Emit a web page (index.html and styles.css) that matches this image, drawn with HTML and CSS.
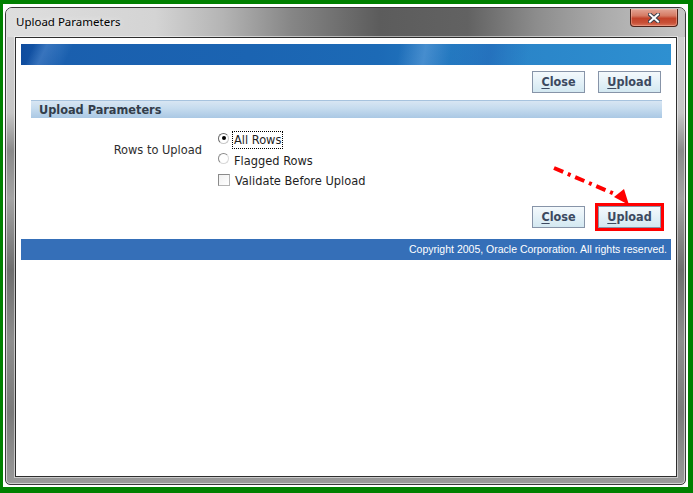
FILE: index.html
```html
<!DOCTYPE html>
<html>
<head>
<meta charset="utf-8">
<title>Upload Parameters</title>
<link rel="stylesheet" href="styles.css">
</head>
<body>
<div class="frame">
  <div class="titlebar">
    <span class="title">Upload Parameters</span>
    <div class="xbtn">
      <svg width="12" height="10" viewBox="0 0 12 10">
        <path d="M2 1.5 L10 8.5 M10 1.5 L2 8.5" stroke="#3a3f4a" stroke-width="4" stroke-linecap="square" fill="none"/>
        <path d="M2 1.5 L10 8.5 M10 1.5 L2 8.5" stroke="#ffffff" stroke-width="2" stroke-linecap="square" fill="none"/>
      </svg>
    </div>
  </div>
  <div class="client">
    <div class="banner"></div>
    <div class="page">
      <div class="btnrow">
        <button class="btn"><u>C</u>lose</button>
        <button class="btn"><u>U</u>pload</button>
      </div>
      <div class="header">Upload Parameters</div>
      <div class="form">
        <div class="label">Rows to Upload</div>
        <div class="options">
          <div class="opt"><span class="radio checked"></span><span class="focus">All Rows</span></div>
          <div class="opt"><span class="radio"></span><span class="text">Flagged Rows</span></div>
          <div class="opt"><span class="check"></span><span class="text">Validate Before Upload</span></div>
        </div>
      </div>
      <div class="btnrow bottom">
        <button class="btn"><u>C</u>lose</button>
        <button class="btn marked"><u>U</u>pload</button>
      </div>
    </div>
    <div class="footer">Copyright 2005, Oracle Corporation. All rights reserved.</div>
  </div>
</div>
<svg class="arrow" width="693" height="493" viewBox="0 0 693 493">
  <path d="M554 168 L617 195" stroke="#ff0000" stroke-width="4" stroke-dasharray="10 5 3 5" fill="none"/>
  <polygon points="614,197 624,189 629,205" fill="#ff0000"/>
</svg>
</body>
</html>
```

FILE: styles.css
```css
html, body {
  margin: 0;
}
body {
  width: 693px;
  height: 493px;
  box-sizing: border-box;
  border-style: solid;
  border-color: #008000;
  border-width: 4px 5px 6px 3px;
  padding: 3px 2px 2px 2px;
  background: #ffffff;
  position: relative;
  overflow: hidden;
  font-family: "DejaVu Sans", sans-serif;
}
.frame {
  box-sizing: border-box;
  width: 681px;
  height: 478px;
  border: 1px solid #3a3a3a;
  border-radius: 7px 7px 5px 5px;
  display: flex;
  flex-direction: column;
  background: linear-gradient(to bottom, #d4d4d4 0%, #c6c6c6 22%, #8a8a8a 30%, #a4a4a4 40%, #6e6e6e 55%, #8e8e8e 70%, #7a7a7a 85%, #9a9a9a 100%);
  box-shadow: inset 0 0 0 1px rgba(255,255,255,0.55);
}
.titlebar {
  height: 29px;
  display: flex;
  align-items: flex-start;
  border-radius: 6px 6px 0 0;
  background: linear-gradient(to right, #dedede 0%, #d4d4d4 22%, #b4b4b4 32%, #868686 42%, #5c5c5c 55%, #626262 68%, #8c8c8c 78%, #ababab 88%, #c6c6c6 100%);
}
.title {
  padding-left: 10px;
  line-height: 28px;
  font-family: "Noto Sans", sans-serif;
  font-size: 11.5px;
  color: #000000;
  text-shadow: 0 0 6px rgba(255,255,255,0.8);
}
.xbtn {
  margin-left: auto;
  margin-right: 7px;
  margin-top: 1px;
  box-sizing: border-box;
  width: 48px;
  height: 18px;
  border: 1px solid #4e2219;
  border-top: none;
  border-radius: 0 0 4px 4px;
  background: linear-gradient(to bottom, #e3a595 0%, #d57a63 40%, #c2432a 55%, #c85036 80%, #d9735a 100%);
  display: flex;
  align-items: center;
  justify-content: center;
  box-shadow: inset 0 0 0 1px rgba(255,200,180,0.4);
}
.client {
  flex: 1;
  margin: 0 8px 7px 9px;
  border: 1px solid #2e2e2e;
  background: #ffffff;
  box-shadow: 0 0 0 1px rgba(255,255,255,0.5);
  display: flex;
  flex-direction: column;
}
.banner {
  margin: 6px 5px 0 5px;
  height: 21px;
  background:
    linear-gradient(115deg, rgba(255,255,255,0) 0%, rgba(255,255,255,0) 2%, rgba(120,170,230,0.35) 4%, rgba(255,255,255,0) 8%),
    linear-gradient(100deg, rgba(255,255,255,0) 58%, rgba(140,190,240,0.35) 62%, rgba(255,255,255,0) 66%, rgba(30,80,170,0.3) 72%, rgba(255,255,255,0) 78%),
    linear-gradient(to right, #0f4c9e 0%, #1a5fae 6%, #1b64b2 35%, #1c6ab6 55%, #2a84c8 75%, #2e90d1 100%);
}
.page {
  padding: 0 14px 0 15px;
}
.btnrow {
  margin-top: 6px;
  margin-right: 1px;
  display: flex;
  justify-content: flex-end;
  gap: 13px;
}
.btn {
  box-sizing: border-box;
  height: 22px;
  padding: 0;
  margin: 0;
  border: 1px solid #8794a8;
  border-radius: 0;
  background: linear-gradient(to bottom, #f4f9fc 0%, #e6f2f8 45%, #d3e8f1 100%);
  font-family: "DejaVu Sans Condensed", "DejaVu Sans", sans-serif;
  font-stretch: condensed;
  font-weight: bold;
  font-size: 12.5px;
  color: #3c4960;
  line-height: 20px;
  width: 53px;
  text-align: center;
}
.btn + .btn {
  width: 63px;
}
.btn u {
  text-decoration-thickness: 1px;
  text-underline-offset: 2px;
}
.btn.marked {
  outline: 3px solid #ff0000;
  outline-offset: 0;
}
.header {
  margin-top: 7px;
  box-sizing: border-box;
  height: 18px;
  padding-left: 8px;
  border-top: 1px solid #a7c3de;
  background: linear-gradient(to bottom, #d8e6f3 0%, #c5dbee 45%, #aac8e4 100%);
  font-family: "DejaVu Sans Condensed", "DejaVu Sans", sans-serif;
  font-stretch: condensed;
  font-weight: bold;
  font-size: 12.6px;
  line-height: 17px;
  color: #333d4a;
}
.form {
  margin-top: 12px;
  display: grid;
  grid-template-columns: 171px 1fr;
  column-gap: 16px;
  font-family: "DejaVu Sans Condensed", "DejaVu Sans", sans-serif;
  font-stretch: condensed;
  font-size: 12.7px;
}
.label {
  padding-top: 10px;
  line-height: 20px;
  text-align: right;
  color: #2e2e2e;
}
.options {
  display: flex;
  flex-direction: column;
}
.opt {
  height: 20px;
  display: flex;
  align-items: center;
  gap: 5px;
  color: #1e1e1e;
}
.radio {
  box-sizing: border-box;
  width: 11px;
  height: 11px;
  margin-top: -4px;
  border-radius: 50%;
  border: 1px solid;
  border-color: #8a8a8a #d8d8d8 #d8d8d8 #8a8a8a;
  background: #ffffff;
  position: relative;
}
.radio.checked {
  border-color: #6a6a6a #c8c8c8 #c8c8c8 #6a6a6a;
}
.radio.checked::after {
  content: "";
  position: absolute;
  left: 2.5px;
  top: 2.5px;
  width: 4px;
  height: 4px;
  border-radius: 50%;
  background: #000000;
}
.check {
  box-sizing: border-box;
  width: 12px;
  height: 12px;
  border: 1px solid;
  border-color: #8a8a8a #b4b4b4 #b4b4b4 #8a8a8a;
  background: linear-gradient(135deg, #f0f0f0, #ffffff);
}
.focus {
  outline: 1px dotted #000000;
  outline-offset: 1px;
  line-height: 14px;
}
.bottom {
  margin-top: 16px;
}
.footer {
  margin: 11px 5px 0 5px;
  height: 21px;
  line-height: 21px;
  padding-right: 4px;
  text-align: right;
  background: #356fb8;
  color: #ffffff;
  font-family: "Liberation Sans", Arial, sans-serif;
  font-size: 10.5px;
}
.arrow {
  position: absolute;
  left: -3px;
  top: -4px;
  pointer-events: none;
}
```
